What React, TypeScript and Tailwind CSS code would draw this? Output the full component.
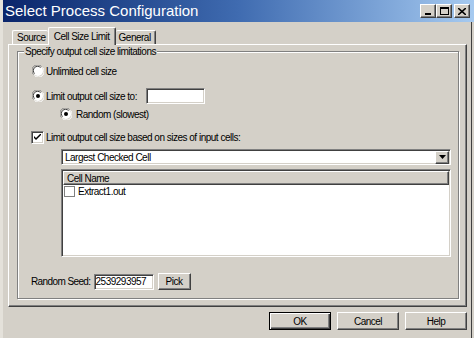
import React from "react"

const font = { fontFamily: '"Liberation Sans", Arial, sans-serif' }

const sunken =
  "bg-white border border-t-[#808080] border-l-[#808080] border-b-white border-r-white shadow-[inset_1px_1px_0_#404040,inset_-1px_-1px_0_#d4d0c8]"
const raised =
  "bg-[#d4d0c8] border border-t-white border-l-white border-b-[#404040] border-r-[#404040] shadow-[inset_-1px_-1px_0_#808080]"

function Radio({ checked }: { checked?: boolean }) {
  return (
    <svg width="12" height="12" viewBox="0 0 12 12" className="shrink-0">
      <circle cx="6" cy="6" r="5" fill="#ffffff" />
      <path d="M1.5 9.5 A5.5 5.5 0 0 1 9.5 1.5" fill="none" stroke="#808080" strokeWidth="1" />
      <path d="M2.6 8.6 A4.2 4.2 0 0 1 8.6 2.6" fill="none" stroke="#404040" strokeWidth="1" />
      <path d="M10.5 2.5 A5.5 5.5 0 0 1 2.5 10.5" fill="none" stroke="#ffffff" strokeWidth="1" />
      {checked && <circle cx="6" cy="6" r="2" fill="#000000" />}
    </svg>
  )
}

function Check({ checked }: { checked?: boolean }) {
  return (
    <div className={`shrink-0 w-[13px] h-[13px] flex items-center justify-center ${sunken}`}>
      {checked && (
        <svg width="7" height="7" viewBox="0 0 7 7">
          <path d="M0 2 L0 4 L2 6 L7 1 L7 -1 L2 4 Z" fill="#000" />
        </svg>
      )}
    </div>
  )
}

function Btn({ children, def, className = "" }: { children: React.ReactNode; def?: boolean; className?: string }) {
  return (
    <div
      className={`flex items-center justify-center text-black ${
        def
          ? "bg-[#d4d0c8] border border-black shadow-[inset_1px_1px_0_#ffffff,inset_-1px_-1px_0_#404040,inset_-2px_-2px_0_#808080]"
          : raised
      } ${className}`}
    >
      {children}
    </div>
  )
}

function TitleBtn({ children }: { children: React.ReactNode }) {
  return <div className={`w-[16px] h-[14px] flex items-center justify-center ${raised}`}>{children}</div>
}

export default function App() {
  return (
    <div
      className="w-[474px] h-[338px] bg-[#d4d0c8] overflow-hidden flex flex-col text-black text-[10px] tracking-[-0.5px] border-l-[3px] border-l-[#e4e1da]"
      style={font}
    >
      {/* title bar */}
      <div className="h-[22px] shrink-0 flex items-center pl-[2px] pr-[4px] -ml-[3px] bg-gradient-to-r from-[#0a246a] via-[#3f6bb0] to-[#a6caf0]">
        <span className="text-white text-[15px] tracking-normal flex-1 pl-[3px]">Select Process Configuration</span>
        <div className="flex items-center">
          <TitleBtn>
            <div className="w-[6px] h-[2px] bg-black mt-[6px] -ml-[1px]" />
          </TitleBtn>
          <TitleBtn>
            <div className="w-[9px] h-[8px] border border-black border-t-2" />
          </TitleBtn>
          <div className="w-[2px]" />
          <TitleBtn>
            <svg width="8" height="7" viewBox="0 0 8 7">
              <path d="M0 0 L8 7 M8 0 L0 7" stroke="#000" strokeWidth="1.6" />
            </svg>
          </TitleBtn>
        </div>
      </div>

      <div className="flex-1 border-r border-r-[#404040] mr-[2px] pl-[5px] pr-[4px] pt-[5px]">
        {/* tabs */}
        <div className="flex items-end h-[17px] pl-[4px] relative z-10">
          <div className="h-[14px] pl-[4px] pr-[2px] flex items-center border border-b-0 border-t-white border-l-white border-r-0 rounded-t-[2px]">
            Source
          </div>
          <div className="h-[18px] -mb-[1px] px-[5px] flex items-center bg-[#d4d0c8] border border-b-0 border-t-white border-l-white border-r-[#404040] shadow-[inset_-1px_0_0_#808080] rounded-t-[2px]">
            Cell Size Limit
          </div>
          <div className="h-[14px] pl-[3px] pr-[4px] flex items-center border border-b-0 border-l-0 border-t-white border-r-[#404040] shadow-[inset_-1px_0_0_#808080] rounded-t-[2px]">
            General
          </div>
        </div>

        {/* tab page */}
        <div className="w-[459px] h-[263px] border border-t-white border-l-white border-b-[#404040] border-r-[#404040] shadow-[inset_-1px_-1px_0_#808080] pt-[6px] pl-[8px]">
          <div className="relative w-[442px] h-[248px] border border-[#808080] shadow-[inset_1px_1px_0_#ffffff,1px_1px_0_#ffffff]">
            <span className="absolute -top-[6px] left-[6px] px-[1px] bg-[#d4d0c8] leading-[12px]">
              Specify output cell size limitations
            </span>

            <div className="flex flex-col pt-[11px] pl-[14px] pr-[7px]">
              <div className="h-[16px] flex items-center gap-[2px]">
                <Radio />
                <span>Unlimited cell size</span>
              </div>

              <div className="h-[16px] mt-[9px] flex items-center">
                <Radio checked />
                <span className="ml-[2px]">Limit output cell size to:</span>
                <div className={`ml-[9px] w-[59px] h-[16px] ${sunken}`} />
              </div>

              <div className="h-[16px] mt-[2px] pl-[28px] flex items-center gap-[4px]">
                <Radio checked />
                <span>Random (slowest)</span>
              </div>

              <div className="h-[16px] mt-[7px] -ml-[1px] flex items-center gap-[2px]">
                <Check checked />
                <span>Limit output cell size based on sizes of input cells:</span>
              </div>

              <div className={`ml-[29px] mt-[4px] h-[16px] flex items-center pl-[3px] pr-[1px] ${sunken}`}>
                <span className="flex-1">Largest Checked Cell</span>
                <div className={`w-[14px] h-[13px] flex items-center justify-center ${raised}`}>
                  <svg width="7" height="4" viewBox="0 0 7 4">
                    <path d="M0 0 H7 L3.5 4 Z" fill="#000" />
                  </svg>
                </div>
              </div>

              <div className={`ml-[29px] mt-[4px] h-[88px] p-[1px] flex flex-col ${sunken}`}>
                <div className={`h-[14px] flex items-center pl-[3px] ${raised}`}>Cell Name</div>
                <div className="h-[12px] flex items-center pl-[1px] gap-[3px]">
                  <div className="w-[11px] h-[11px] bg-white border border-[#808080]" />
                  <span>Extract1.out</span>
                </div>
              </div>

              <div className="h-[17px] mt-[16px] flex items-center">
                <span className="ml-[-1px] tracking-[-0.6px]">Random Seed:</span>
                <div className={`ml-[3px] w-[60px] h-[16px] flex items-center pl-[1px] ${sunken}`}>2539293957</div>
                <Btn className="ml-[4px] w-[33px] h-[17px]">Pick</Btn>
              </div>
            </div>
          </div>
        </div>

        {/* dialog buttons */}
        <div className="flex justify-end gap-[6px] mt-[5px] w-[459px]">
          <Btn def className="w-[62px] h-[18px]">OK</Btn>
          <Btn className="w-[62px] h-[18px]">Cancel</Btn>
          <Btn className="w-[62px] h-[18px]">Help</Btn>
        </div>
      </div>
    </div>
  )
}
